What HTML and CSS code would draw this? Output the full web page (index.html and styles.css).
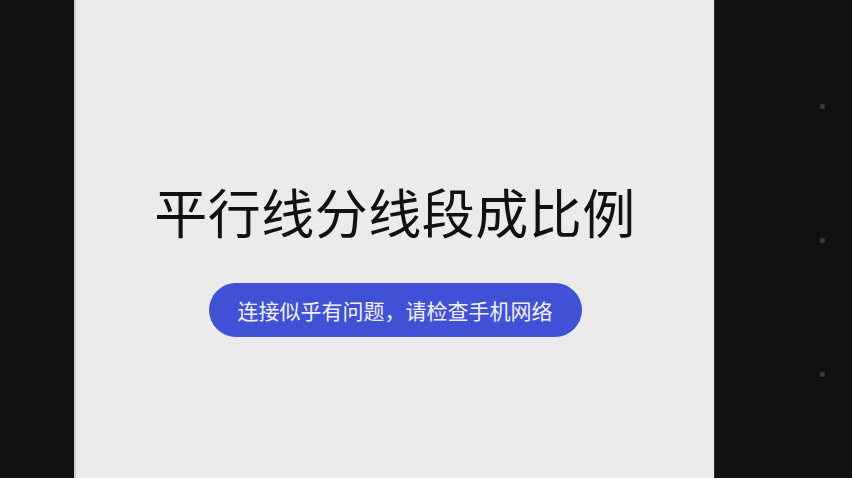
FILE: index.html
```html
<!DOCTYPE html>
<html lang="zh">
<head>
<meta charset="utf-8">
<link rel="stylesheet" href="styles.css">
</head>
<body>
<div class="screen">
  <div class="panel">
    <h1 class="title">平行线分线段成比例</h1>
    <div class="toast">连接似乎有问题，请检查手机网络</div>
  </div>
  <div class="side">
    <span class="dot"></span>
    <span class="dot"></span>
    <span class="dot"></span>
  </div>
</div>
</body>
</html>
```
FILE: styles.css
```css
html, body {
  margin: 0;
  padding: 0;
  background: #111111;
}
.screen {
  display: flex;
  width: 852px;
  height: 478px;
  overflow: hidden;
  font-family: "Noto Sans CJK SC", "Noto Sans", sans-serif;
}
.panel {
  margin-left: 74px;
  width: 641px;
  height: 478px;
  box-sizing: border-box;
  background: #ebebeb;
  border-left: 2px solid #cfcfcf;
  border-right: 1px solid #2a2a2a;
  display: flex;
  flex-direction: column;
  align-items: center;
  padding-top: 181px;
}
.title {
  margin: 0;
  font-size: 53px;
  line-height: 60px;
  font-weight: 400;
  color: #111111;
  letter-spacing: 0.5px;
}
.toast {
  margin-top: 42px;
  height: 54px;
  line-height: 54px;
  padding: 0 29px;
  border-radius: 27px;
  background: #4051d5;
  color: #f2f2f6;
  font-size: 21px;
}
.side {
  display: flex;
  flex-direction: column;
  align-items: flex-start;
  padding-top: 104px;
  padding-left: 105px;
  gap: 129px;
}
.dot {
  display: block;
  width: 5px;
  height: 5px;
  border-radius: 2px;
  background: #3a3a3a;
}
```
